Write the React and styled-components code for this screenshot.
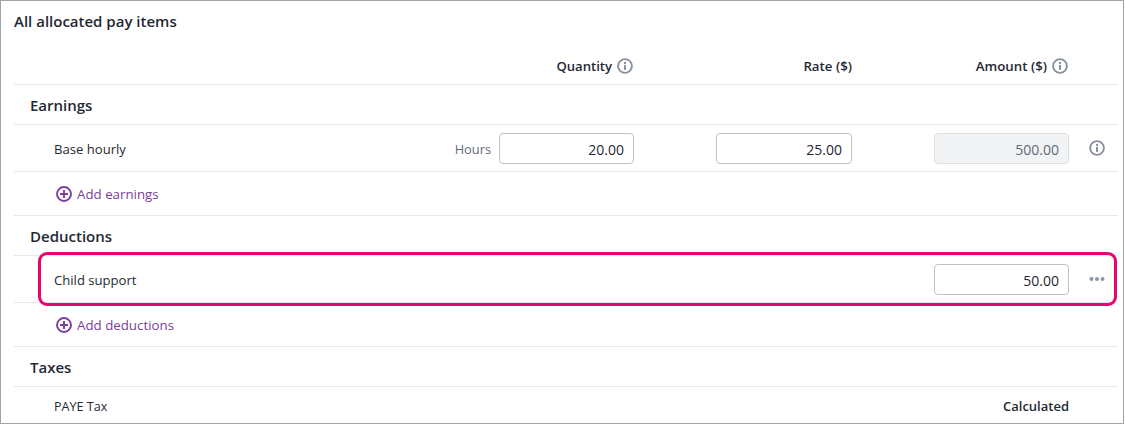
import React from "react";
import styled, { createGlobalStyle } from "styled-components";

const Global = createGlobalStyle`
  html, body { margin: 0; padding: 0; background: #fff; }
  body { font-family: "Open Sans", "Noto Sans", "Liberation Sans", sans-serif; color: #1f2933; }
`;

const Frame = styled.div`
  position: relative;
  box-sizing: border-box;
  width: 1124px;
  height: 424px;
  border: 1px solid #a3a3a3;
  padding: 0 5px 0 13px;
  overflow: hidden;
`;

const Title = styled.h2`
  margin: 0;
  height: 40px;
  display: flex;
  align-items: center;
  font-size: 15px;
  font-weight: 600;
  color: #1f2933;
`;

const Row = styled.div`
  box-sizing: border-box;
  display: grid;
  grid-template-columns: 1fr 200px 218px 217px 49px;
  align-items: center;
  height: ${(p) => p.$h}px;
  padding-left: 40px;
  border-bottom: ${(p) => (p.$last ? "none" : "1px solid #e6e8eb")};
`;

const HeaderRow = styled(Row)`
  padding-top: 6px;
`;

const SectionRow = styled.div`
  box-sizing: border-box;
  display: flex;
  align-items: center;
  height: 40px;
  padding-left: 16px;
  border-bottom: 1px solid #e6e8eb;
  font-size: 15px;
  font-weight: 600;
  color: #1f2933;
`;

const Label = styled.span`
  padding-top: 2px;
  font-size: 13.1px;
  color: #1f2933;
`;

const TaxLabel = styled(Label)`
  padding-top: 0;
  font-size: 12.6px;
`;

const Head = styled.div`
  display: flex;
  justify-content: flex-end;
  align-items: center;
  gap: 5px;
  font-size: ${(p) => p.$size || 13.3}px;
  font-weight: 600;
  color: #1f2933;
`;

const Cell = styled.div`
  display: flex;
  justify-content: flex-end;
  align-items: center;
  gap: 8px;
`;

const Unit = styled.span`
  padding-top: 2px;
  font-size: 12.8px;
  color: #5f6b7a;
`;

const Field = styled.div`
  box-sizing: border-box;
  width: ${(p) => p.$w || 135}px;
  height: 31px;
  display: flex;
  align-items: center;
  justify-content: flex-end;
  padding: 2px 9px 0;
  border: 1px solid ${(p) => (p.$disabled ? "#dcdfe3" : "#bfc3c8")};
  border-radius: 4px;
  background: ${(p) => (p.$disabled ? "#f2f3f5" : "#fff")};
  color: ${(p) => (p.$disabled ? "#5f6b7a" : "#1f2933")};
  font-size: 14px;
`;

const Action = styled.div`
  display: flex;
  justify-content: flex-end;
  padding-right: 13px;
  color: #8e96a1;
`;

const AddLink = styled.a`
  display: inline-flex;
  align-items: center;
  gap: 5px;
  margin-left: 2px;
  font-size: 13.3px;
  color: #7a3f9d;
`;

const Strong = styled.span`
  font-size: 13px;
  font-weight: 600;
  color: #1f2933;
`;

const HeadIcon = styled.span`
  display: inline-flex;
  margin-right: 1px;
`;

const Highlight = styled.div`
  position: absolute;
  left: 37px;
  top: 251px;
  width: 1079px;
  height: 54px;
  box-sizing: border-box;
  border: 3px solid #e8056f;
  border-radius: 9px;
  pointer-events: none;
`;

const InfoIcon = () => (
  <svg width="16" height="16" viewBox="0 0 16 16" fill="none">
    <circle cx="8" cy="8" r="6.9" stroke="#8a929d" strokeWidth="1.9" />
    <circle cx="8" cy="4.9" r="1.2" fill="#8a929d" />
    <rect x="7" y="6.9" width="2" height="5" fill="#8a929d" />
  </svg>
);

const PlusIcon = () => (
  <svg width="16" height="16" viewBox="0 0 16 16" fill="none">
    <circle cx="8" cy="8" r="7" stroke="#7a3f9d" strokeWidth="1.9" />
    <path d="M8 4v8M4 8h8" stroke="#7a3f9d" strokeWidth="1.9" />
  </svg>
);

const DotsIcon = () => (
  <svg width="16" height="16" viewBox="0 0 16 16" fill="#8e96a1">
    <circle cx="2.5" cy="8" r="2" />
    <circle cx="8" cy="8" r="2" />
    <circle cx="13.5" cy="8" r="2" />
  </svg>
);

export default function App() {
  return (
    <>
      <Global />
      <Frame>
        <Title>All allocated pay items</Title>
        <HeaderRow $h={44}>
          <span />
          <Head $size={13.1}>Quantity <HeadIcon><InfoIcon /></HeadIcon></Head>
          <Head>Rate ($)</Head>
          <Head>Amount ($) <HeadIcon><InfoIcon /></HeadIcon></Head>
          <span />
        </HeaderRow>
        <SectionRow>Earnings</SectionRow>
        <Row $h={47}>
          <Label>Base hourly</Label>
          <Cell><Unit>Hours</Unit><Field>20.00</Field></Cell>
          <Cell><Field $w={136}>25.00</Field></Cell>
          <Cell><Field $disabled>500.00</Field></Cell>
          <Action><InfoIcon /></Action>
        </Row>
        <Row $h={44}>
          <AddLink><PlusIcon />Add earnings</AddLink>
        </Row>
        <SectionRow>Deductions</SectionRow>
        <Row $h={47}>
          <Label>Child support</Label>
          <span />
          <span />
          <Cell><Field>50.00</Field></Cell>
          <Action><DotsIcon /></Action>
        </Row>
        <Row $h={44}>
          <AddLink><PlusIcon />Add deductions</AddLink>
        </Row>
        <SectionRow>Taxes</SectionRow>
        <Row $h={38} $last>
          <TaxLabel>PAYE Tax</TaxLabel>
          <span />
          <span />
          <Cell><Strong>Calculated</Strong></Cell>
          <span />
        </Row>
        <Highlight />
      </Frame>
    </>
  );
}
